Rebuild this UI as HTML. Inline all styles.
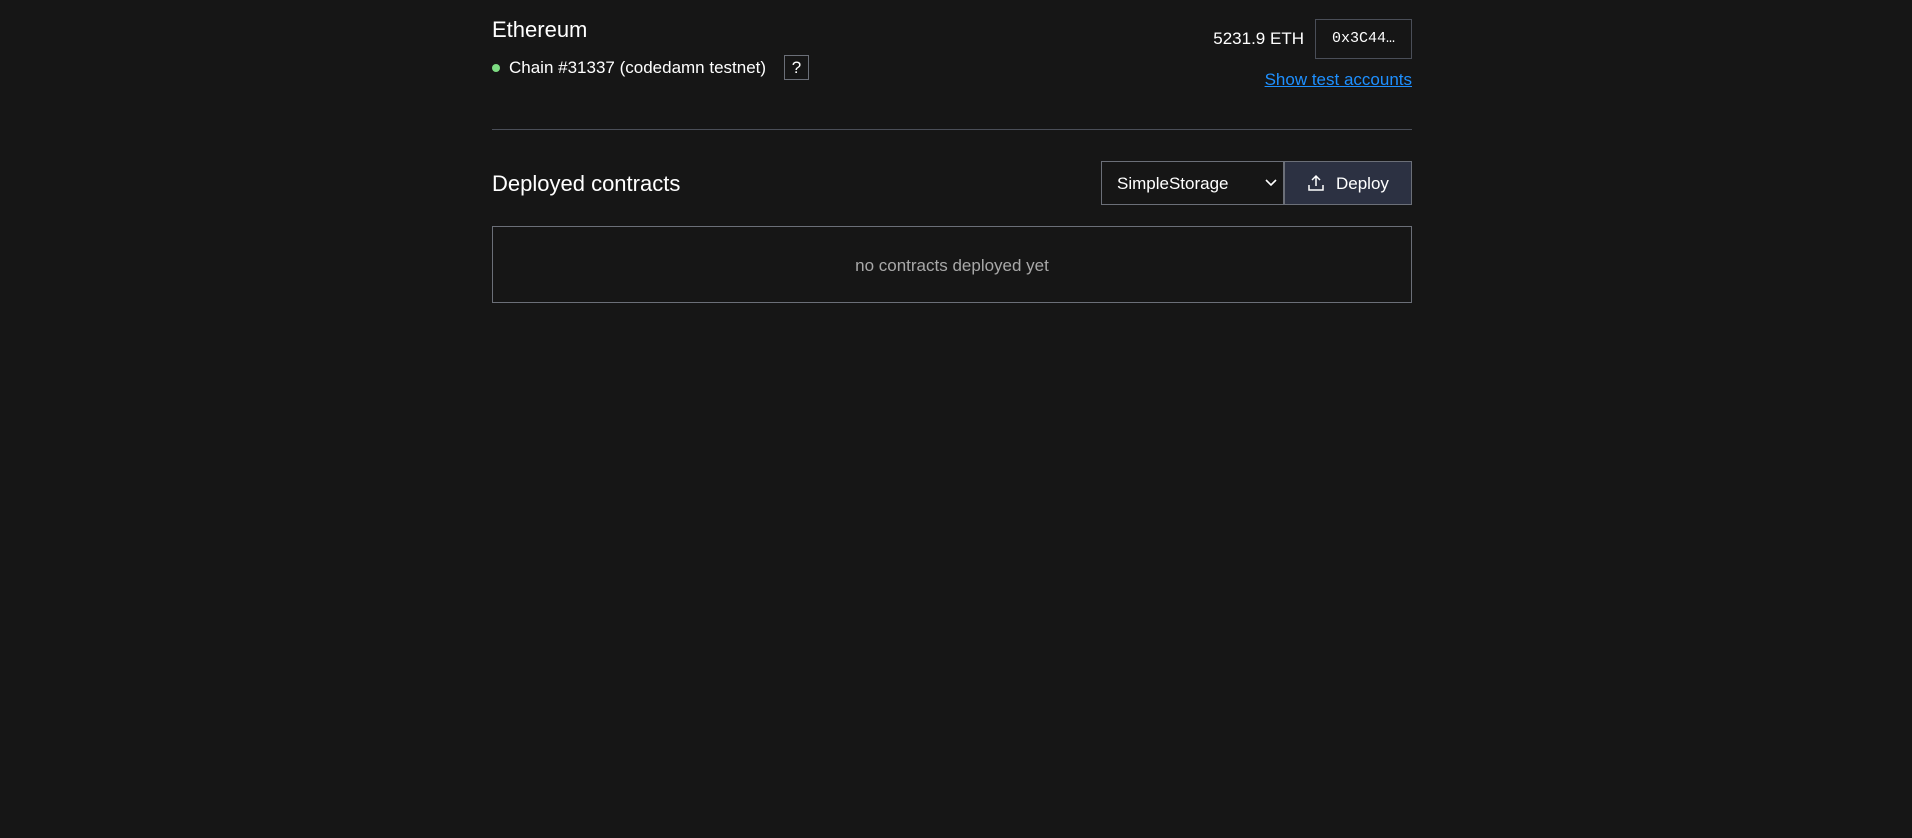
<!DOCTYPE html>
<html><head><style>
body{margin:0;background:#161616;width:1912px;height:838px;position:relative;font-family:"Liberation Sans",sans-serif;color:#fff;overflow:hidden}
.a{position:absolute}
</style></head><body>
<div class="a" style="left:492px;top:17px;font-size:22px">Ethereum</div>
<div class="a" style="left:492px;top:64px;width:8px;height:8px;border-radius:50%;background:#7ddc82"></div>
<div class="a" style="left:509px;top:58px;font-size:17px">Chain #31337 (codedamn testnet)</div>
<div class="a" style="left:784px;top:55px;width:23px;height:23px;border:1px solid #6b6f78;font-size:17px;text-align:center;line-height:23px">?</div>
<div class="a" style="left:1100px;top:29px;width:204px;text-align:right;font-size:17px">5231.9 ETH</div>
<div class="a" style="left:1315px;top:19px;width:95px;height:38px;border:1px solid #4a4e58;font-family:'Liberation Mono',monospace;font-size:15px;line-height:38px;text-align:center">0x3C44…</div>
<div class="a" style="left:1180px;top:70px;width:232px;text-align:right;font-size:17px;color:#1e90ff;text-decoration:underline">Show test accounts</div>
<div class="a" style="left:492px;top:129px;width:920px;height:1px;background:#4a4e58"></div>
<div class="a" style="left:492px;top:171px;font-size:22px">Deployed contracts</div>
<div class="a" style="left:1101px;top:161px;width:181px;height:42px;border:1px solid #6b6f78;font-size:17px;line-height:44px;box-sizing:content-box"><span style="margin-left:15px">SimpleStorage</span>
<svg class="a" style="left:163px;top:17px" width="12" height="8" viewBox="0 0 12 8"><path d="M1 1l5 5 5-5" fill="none" stroke="#fff" stroke-width="1.6"/></svg></div>
<div class="a" style="left:1284px;top:161px;width:126px;height:42px;border:1px solid #6b6f78;background:#2c3142;font-size:17px;line-height:44px">
<svg class="a" style="left:22px;top:12px" width="18" height="18" viewBox="0 0 18 18"><path d="M9 12V2M5 6l4-4 4 4M2 11v5h14v-5" fill="none" stroke="#fff" stroke-width="1.5"/></svg>
<span class="a" style="left:51px">Deploy</span></div>
<div class="a" style="left:492px;top:226px;width:918px;height:75px;border:1px solid #6b6f78;text-align:center;line-height:77px;font-size:17px;color:#a8a8a8">no contracts deployed yet</div>
</body></html>
